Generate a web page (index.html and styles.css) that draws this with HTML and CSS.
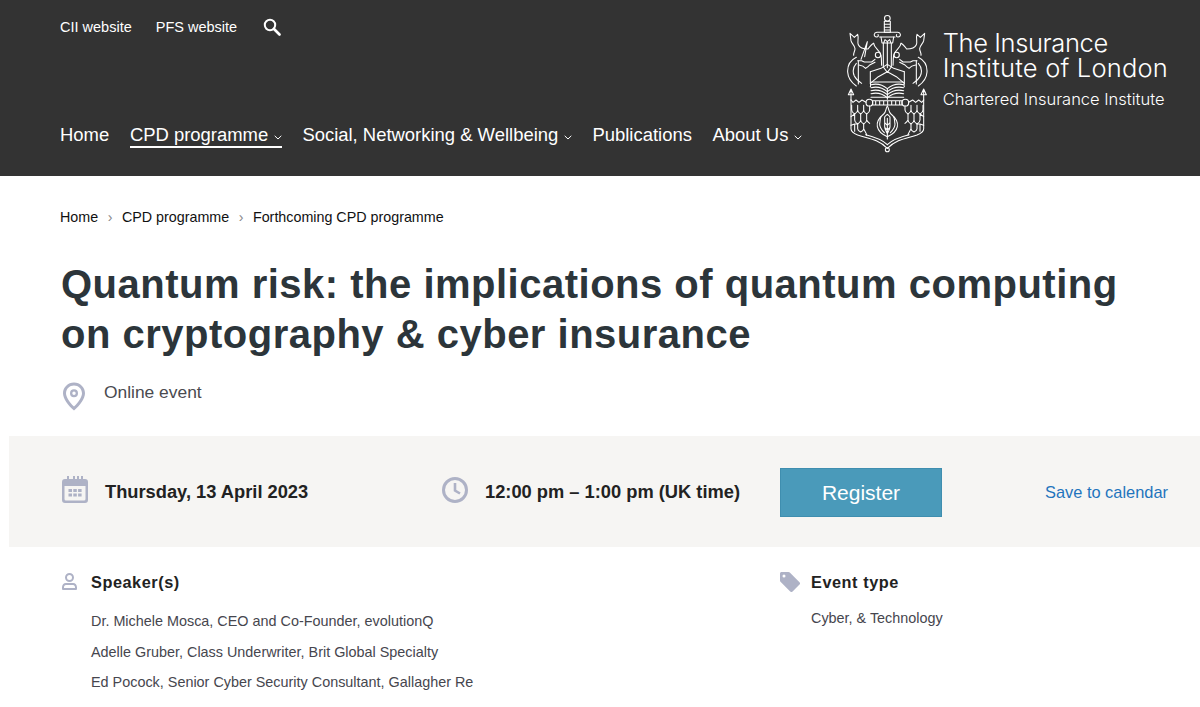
FILE: index.html
```html
<!DOCTYPE html>
<html lang="en">
<head>
<meta charset="utf-8">
<title>Quantum risk</title>
<link rel="stylesheet" href="styles.css">
</head>
<body>
<header class="site-header">
  <div class="header-left">
    <nav class="top-links">
      <a>CII website</a>
      <a>PFS website</a>
      <svg class="search-icon" viewBox="0 0 18 18" width="18" height="18"><circle cx="7" cy="7" r="5.2" fill="none" stroke="#fff" stroke-width="2"/><path d="M11 11l5.500 5.500" stroke="#fff" stroke-width="2.600" stroke-linecap="round"/></svg>
    </nav>
    <nav class="main-nav">
      <a>Home</a>
      <a class="active">CPD programme<svg class="chev" viewBox="0 0 8 5" width="8" height="5"><path d="M.7.8 4 4 7.300.8" fill="none" stroke="#fff"/></svg></a>
      <a>Social, Networking &amp; Wellbeing<svg class="chev" viewBox="0 0 8 5" width="8" height="5"><path d="M.7.8 4 4 7.300.8" fill="none" stroke="#fff"/></svg></a>
      <a>Publications</a>
      <a>About Us<svg class="chev" viewBox="0 0 8 5" width="8" height="5"><path d="M.7.8 4 4 7.300.8" fill="none" stroke="#fff"/></svg></a>
    </nav>
  </div>
  <div class="brand">
    <svg class="crest" viewBox="48 42 243 417" width="81" height="139" fill="none" stroke="#fff" stroke-width="3.200" stroke-linejoin="round" stroke-linecap="round">
      <defs>
        <g id="crest-half">
          <path d="M57 100l3 22c2 9 11 13 12 24 0 8-5 12-4 20M57 100l13 12 10-9c4 11-2 22 2 31 5 11 19 13 29 13 6-8 11-14 17-17"/>
          <path d="M128 130c2 16 17 18 22 36 2 10 1 22 2 30"/>
          <circle cx="141" cy="165" r="8"/>
          <path d="M76 172c-16 8-27 24-26 44 1 20 12 32 26 42M76 190c-9 10-12 24-6 38 5 10 14 17 22 22"/>
          <path d="M80 182h12l8 4h22l10-8M84 195c8 1 15 4 20 10 4-2 8-5 12-10l16-8"/>
          <path d="M82 182v70M118 215v33c0 4 2 8 0 12"/>
          <path d="M118 215l32-10 19-12M118 250l24-20 27-15"/>
          <path d="M60 268v32M52 284l8-17 8 17z"/>
          <path d="M120 254c17-4 35 0 49 12M120 263c17-4 35 0 49 12M120 272c17-4 35 0 49 12M120 281c17-4 35 0 49 12"/>
          <circle cx="115" cy="308" r="10"/>
          <path d="M60 300v86c0 9 8 14 20 19 28 10 60 11 89 40"/>
          <path d="M104 404c24 6 50 14 65 30"/>
          <path d="M62 316v14c0 7 9 12 9 12s9-5 9-12v-14M80 316v14c0 7 9 12 9 12s9-5 9-12v-14M98 318v12c0 7 9 12 9 12s9-5 9-12v-12"/>
          <path d="M60 350l11-8v18c0 7 9 12 9 12s9-5 9-12v-18M89 342v18c0 7 9 12 9 12s9-5 9-12v-18M107 360c2 5 9 10 9 10"/>
          <path d="M60 376l11-4 9 0M80 372v14c0 5 9 10 9 10s9-5 9-10v-14M98 386c2 6 9 14 9 20M71 372v22"/>
          <path d="M60 300l6 7 9-7 9 7 9-7 12 7"/>
          <path d="M169 318c-6 10-3 17-11 24-12 10-22 24-19 38 3 14 15 24 30 30"/>
          <path d="M150 350c-4 8-2 14-4 22 0 10 6 18 14 26"/>
        </g>
      </defs>
      <use href="#crest-half"/>
      <use href="#crest-half" transform="translate(338 0) scale(-1 1)"/>
      <circle cx="169" cy="55" r="8.500"/>
      <path d="M160 64h18v33h-18zM160 73h18M160 82h18M160 90h18"/>
      <path d="M140 97c-12-2-14 14-3 14 5 0 6-4 4-7M198 97c12-2 14 14 3 14-5 0-6-4-4-7M140 97h58M146 111h46"/>
      <path d="M150 111l3 18h32l3-18M158 129l4-10 7 6 7-6 4 10M157 129v72l12 16 12-16v-72M169 125v78"/>
      <path d="M109 125L90 178M109 125l-8 45"/>
      <path d="M122 246h94M169 266v32M120 292h98"/>
      <path d="M125 302h88v13h-88zM134 302v13M146 302v13M158 302v13M170 302v13M182 302v13M194 302v13M206 302v13"/>
      <path d="M169 343c-3 3-5 3-8 8v30c0 6 4 12 8 20 4-8 8-14 8-20v-30c-3-5-5-5-8-8zM169 355v62M161 368l8 8 8-8M161 382l8 8 8-8"/>
      <circle cx="169" cy="449" r="6"/>
    </svg>
    <div class="brand-text">
      <div class="brand-name"><span class="brand-line-a">The Insurance</span><span class="brand-line-b">Institute of London</span></div>
      <div class="brand-sub">Chartered Insurance Institute</div>
    </div>
  </div>
</header>
<main>
  <div class="intro">
    <nav class="breadcrumb"><a>Home</a><span class="sep">›</span><a>CPD programme</a><span class="sep">›</span><a>Forthcoming CPD programme</a></nav>
    <h1>Quantum risk: the implications of quantum computing on cryptography &amp; cyber insurance</h1>
    <div class="location">
      <svg viewBox="0 0 22 28" width="22" height="29"><path fill-rule="evenodd" fill="#aeb2c6" d="M11 0C5 0 0 4.800 0 10.700 0 16 5 23 11 28c6-5 11-12 11-17.300C22 4.800 17 0 11 0zm0 3c4.400 0 8 3.400 8 7.700 0 3.800-3.600 9-8 13.300-4.400-4.300-8-9.500-8-13.300C3 6.400 6.600 3 11 3zm0 3.700a4 4 0 1 0 0 8 4 4 0 0 0 0-8zm0 2.300a1.700 1.700 0 1 1 0 3.400 1.700 1.700 0 0 1 0-3.400z"/></svg>
      <span>Online event</span>
    </div>
  </div>
  <section class="band">
    <div class="band-date">
      <svg viewBox="0 0 26 27" width="26" height="27"><path fill="#aeb2c6" fill-rule="evenodd" d="M5 0h2v3h4V0h2v3h2V0h2v3h2V0h2v3h2a3 3 0 0 1 3 3v18a3 3 0 0 1-3 3H3a3 3 0 0 1-3-3V6a3 3 0 0 1 3-3h2zM2.500 10v13a1.500 1.500 0 0 0 1.500 1.500h18a1.500 1.500 0 0 0 1.500-1.500V10zM6.500 13h3.500v3H6.500zm4.800 0h3.500v3h-3.500zm4.800 0h3.500v3h-3.500zM6.500 17.500h3.500v3H6.500zm4.800 0h3.500v3h-3.500zm4.800 0h3.500v3h-3.500z"/></svg>
      <strong>Thursday, 13 April 2023</strong>
    </div>
    <div class="band-time">
      <svg viewBox="0 0 26 26" width="26" height="26"><circle cx="13" cy="13" r="11.500" fill="none" stroke="#aeb2c6" stroke-width="3"/><path d="M13 6v7.500l5 3" fill="none" stroke="#aeb2c6" stroke-width="2.600"/></svg>
      <strong>12:00 pm – 1:00 pm (UK time)</strong>
    </div>
    <a class="register">Register</a>
    <a class="save">Save to calendar</a>
  </section>
  <section class="details">
    <div class="col-speakers">
      <h2><svg viewBox="0 0 15 17" width="15" height="17"><path fill="#aeb2c6" fill-rule="evenodd" d="M7.500 0a4.500 4.500 0 1 1 0 9 4.500 4.500 0 0 1 0-9zm0 2a2.500 2.500 0 1 0 0 5 2.500 2.500 0 0 0 0-5zM4 10h7c2.500 0 4 2 4 4.500V16a1 1 0 0 1-1 1H1a1 1 0 0 1-1-1v-1.500C0 12 1.500 10 4 10zm0 2c-1.300 0-2 1-2 2.500V15h11v-.5c0-1.500-.7-2.500-2-2.500z"/></svg>Speaker(s)</h2>
      <p>Dr. Michele Mosca, CEO and Co-Founder, evolutionQ</p>
      <p>Adelle Gruber, Class Underwriter, Brit Global Specialty</p>
      <p>Ed Pocock, Senior Cyber Security Consultant, Gallagher Re</p>
    </div>
    <div class="col-type">
      <h2><svg viewBox="0 0 20 20" width="20" height="20"><path fill="#aeb2c6" fill-rule="evenodd" d="M1.500 0h7c.5 0 1 .2 1.300.5l9.700 9.700c.7.700.7 1.700 0 2.400l-6.900 6.900c-.7.700-1.700.7-2.400 0L.5 9.800C.2 9.500 0 9 0 8.500v-7C0 .7.700 0 1.500 0zM4 2.500a1.500 1.500 0 1 0 0 3 1.500 1.500 0 0 0 0-3z"/></svg>Event type</h2>
      <p>Cyber, &amp; Technology</p>
    </div>
  </section>
</main>
</body>
</html>
```
FILE: styles.css
```css
* { box-sizing: border-box; }
html, body { margin: 0; padding: 0; }
body { background: #fff; font-family: "Liberation Sans", Arial, sans-serif; color: #2b2b2b; overflow: hidden; }
.site-header { height: 176px; background: #333; color: #fff; display: flex; justify-content: space-between; padding: 0 32px 0 60px; }
.top-links { display: flex; align-items: center; gap: 24px; height: 18px; margin-top: 18px; font-size: 14.500px; }
.search-icon { margin-left: 2px; }
.main-nav { display: flex; gap: 20.700px; margin-top: 87px; font-size: 18.450px; line-height: 24px; }
.main-nav a { display: block; height: 25px; white-space: nowrap; }
.main-nav a.active { border-bottom: 2px solid #fff; }
.chev { margin-left: 5.500px; vertical-align: 1px; }
.brand { display: flex; gap: 15px; padding-top: 14px; }
.crest { display: block; }
.brand-text { font-family: Inter, sans-serif; font-weight: 300; padding-top: 16px; white-space: nowrap; }
.brand-name { font-size: 25.500px; line-height: 25px; }
.brand-line-a, .brand-line-b { display: block; }
.brand-line-a { letter-spacing: -.4px; }
.brand-line-b { letter-spacing: .2px; }
.brand-sub { font-size: 16.500px; line-height: 20px; margin-top: 9px; }
.intro { padding: 31px 60px 0; }
.breadcrumb { font-size: 14.300px; line-height: 20px; color: #111; display: flex; }
.sep { color: #888; margin: 0 9.500px; }
h1 { margin: 32px 0 0; font-size: 40px; line-height: 50px; font-weight: 700; color: #2c353a; letter-spacing: .5px; max-width: 1090px; padding-left: 1px; }
.location { display: flex; align-items: flex-start; gap: 19px; margin-top: 23px; font-size: 17.400px; line-height: 20px; color: #4a4a4f; }
.location svg { margin-left: 3px; }
.band { margin: 25px 0 0 9px; height: 111px; background: #f6f5f3; display: flex; align-items: center; padding: 2px 32px 0 53px; }
.band strong { font-size: 18.300px; color: #222; }
.band-date, .band-time { display: flex; align-items: center; gap: 17px; margin-top: -2px; }
.band-date svg, .band-time svg { margin-top: -4px; }
.band-date { width: 380px; }
.band-time { width: 338px; }
.register { width: 162px; height: 49px; background: #4a9aba; color: #fff; border: 1px solid #3f8eaf; font-size: 21px; display: flex; align-items: center; justify-content: center; }
.save { margin-left: auto; margin-top: -1px; color: #1f74bd; font-size: 16.400px; }
.details { display: flex; padding: 24px 0 0 61px; }
.col-speakers { width: 719px; }
h2 { margin: 0; font-size: 16.300px; line-height: 22px; font-weight: 700; color: #222; letter-spacing: .55px; display: flex; align-items: center; gap: 15px; }
.col-speakers h2 svg { margin: -1px 0 0 1px; }
.col-speakers h2 { gap: 14px; }
.col-speakers p { margin: 10.500px 0 0 30px; font-size: 14.400px; line-height: 20px; color: #46464e; }
.col-speakers h2 + p { margin-top: 18px; }
.col-type h2 { gap: 11px; }
.col-type p { margin: 16px 0 0 31px; font-size: 14.400px; line-height: 18px; color: #46464e; }
```
